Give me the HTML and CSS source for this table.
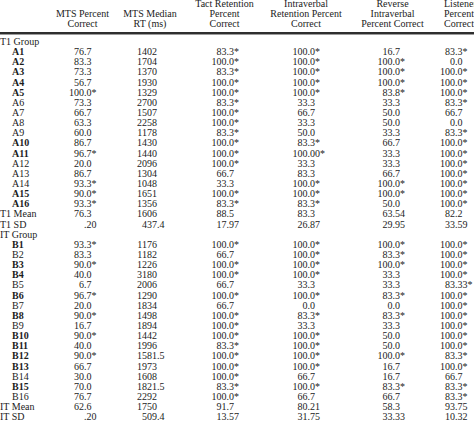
FILE: index.html
```html
<!DOCTYPE html>
<html>
<head>
<meta charset="utf-8">
<link rel="stylesheet" href="styles.css">
</head>
<body>
<table class="tbl">
<colgroup><col class="c0"><col class="c1"><col class="c2"><col class="c3"><col class="c4"><col class="c5"><col class="c6"></colgroup>
<thead>
<tr>
<th></th>
<th>MTS Percent<br>Correct</th>
<th>MTS Median<br>RT (ms)</th>
<th>Tact Retention<br>Percent<br>Correct</th>
<th>Intraverbal<br>Retention Percent<br>Correct</th>
<th>Reverse<br>Intraverbal<br>Percent Correct</th>
<th>Listener<br>Percent<br>Correct</th>
</tr>
<tr class="rule"><td colspan="7"></td></tr>
</thead>
<tbody>
<tr class="first"><td class="lab">T1 Group</td><td></td><td></td><td></td><td></td><td></td><td></td></tr>
<tr><td class="sub b">A1</td><td><span class="i">76</span>.7</td><td><span class="i">1402</span></td><td><span class="i">83</span>.3*</td><td><span class="i">100</span>.0*</td><td><span class="i">16</span>.7</td><td><span class="i">83</span>.3*</td></tr>
<tr><td class="sub b">A2</td><td><span class="i">83</span>.3</td><td><span class="i">1704</span></td><td><span class="i">100</span>.0*</td><td><span class="i">100</span>.0*</td><td><span class="i">100</span>.0*</td><td><span class="i">0</span>.0</td></tr>
<tr><td class="sub b">A3</td><td><span class="i">73</span>.3</td><td><span class="i">1370</span></td><td><span class="i">83</span>.3*</td><td><span class="i">100</span>.0*</td><td><span class="i">100</span>.0*</td><td><span class="i">100</span>.0*</td></tr>
<tr><td class="sub b">A4</td><td><span class="i">56</span>.7</td><td><span class="i">1930</span></td><td><span class="i">100</span>.0*</td><td><span class="i">100</span>.0*</td><td><span class="i">100</span>.0*</td><td><span class="i">100</span>.0*</td></tr>
<tr><td class="sub b">A5</td><td><span class="i">100</span>.0*</td><td><span class="i">1329</span></td><td><span class="i">100</span>.0*</td><td><span class="i">100</span>.0*</td><td><span class="i">83</span>.8*</td><td><span class="i">100</span>.0*</td></tr>
<tr><td class="sub">A6</td><td><span class="i">73</span>.3</td><td><span class="i">2700</span></td><td><span class="i">83</span>.3*</td><td><span class="i">33</span>.3</td><td><span class="i">33</span>.3</td><td><span class="i">83</span>.3*</td></tr>
<tr><td class="sub">A7</td><td><span class="i">66</span>.7</td><td><span class="i">1507</span></td><td><span class="i">100</span>.0*</td><td><span class="i">66</span>.7</td><td><span class="i">50</span>.0</td><td><span class="i">66</span>.7</td></tr>
<tr><td class="sub">A8</td><td><span class="i">63</span>.3</td><td><span class="i">2258</span></td><td><span class="i">100</span>.0*</td><td><span class="i">33</span>.3</td><td><span class="i">50</span>.0</td><td><span class="i">0</span>.0</td></tr>
<tr><td class="sub">A9</td><td><span class="i">60</span>.0</td><td><span class="i">1178</span></td><td><span class="i">83</span>.3*</td><td><span class="i">50</span>.0</td><td><span class="i">33</span>.3</td><td><span class="i">83</span>.3*</td></tr>
<tr><td class="sub b">A10</td><td><span class="i">86</span>.7</td><td><span class="i">1430</span></td><td><span class="i">100</span>.0*</td><td><span class="i">83</span>.3*</td><td><span class="i">66</span>.7</td><td><span class="i">100</span>.0*</td></tr>
<tr><td class="sub b">A11</td><td><span class="i">96</span>.7*</td><td><span class="i">1440</span></td><td><span class="i">100</span>.0*</td><td><span class="i">100</span>.00*</td><td><span class="i">33</span>.3</td><td><span class="i">100</span>.0*</td></tr>
<tr><td class="sub">A12</td><td><span class="i">20</span>.0</td><td><span class="i">2096</span></td><td><span class="i">100</span>.0*</td><td><span class="i">33</span>.3</td><td><span class="i">33</span>.3</td><td><span class="i">100</span>.0*</td></tr>
<tr><td class="sub">A13</td><td><span class="i">86</span>.7</td><td><span class="i">1304</span></td><td><span class="i">66</span>.7</td><td><span class="i">83</span>.3</td><td><span class="i">66</span>.7</td><td><span class="i">100</span>.0*</td></tr>
<tr><td class="sub">A14</td><td><span class="i">93</span>.3*</td><td><span class="i">1048</span></td><td><span class="i">33</span>.3</td><td><span class="i">100</span>.0*</td><td><span class="i">100</span>.0*</td><td><span class="i">100</span>.0*</td></tr>
<tr><td class="sub b">A15</td><td><span class="i">90</span>.0*</td><td><span class="i">1651</span></td><td><span class="i">100</span>.0*</td><td><span class="i">100</span>.0*</td><td><span class="i">100</span>.0*</td><td><span class="i">100</span>.0*</td></tr>
<tr><td class="sub b">A16</td><td><span class="i">93</span>.3*</td><td><span class="i">1356</span></td><td><span class="i">83</span>.3*</td><td><span class="i">83</span>.3*</td><td><span class="i">50</span>.0</td><td><span class="i">100</span>.0*</td></tr>
<tr><td class="lab">T1 Mean</td><td><span class="i">76</span>.3</td><td><span class="i">1606</span></td><td><span class="i">88</span>.5</td><td><span class="i">83</span>.3</td><td><span class="i">63</span>.54</td><td><span class="i">82</span>.2</td></tr>
<tr><td class="lab">T1 SD</td><td><span class="i"></span>.20</td><td><span class="i">437</span>.4</td><td><span class="i">17</span>.97</td><td><span class="i">26</span>.87</td><td><span class="i">29</span>.95</td><td><span class="i">33</span>.59</td></tr>
<tr><td class="lab it">IT Group</td><td></td><td></td><td></td><td></td><td></td><td></td></tr>
<tr><td class="sub b">B1</td><td><span class="i">93</span>.3*</td><td><span class="i">1176</span></td><td><span class="i">100</span>.0*</td><td><span class="i">100</span>.0*</td><td><span class="i">100</span>.0*</td><td><span class="i">100</span>.0*</td></tr>
<tr><td class="sub">B2</td><td><span class="i">83</span>.3</td><td><span class="i">1182</span></td><td><span class="i">66</span>.7</td><td><span class="i">100</span>.0*</td><td><span class="i">83</span>.3*</td><td><span class="i">100</span>.0*</td></tr>
<tr><td class="sub b">B3</td><td><span class="i">90</span>.0*</td><td><span class="i">1226</span></td><td><span class="i">100</span>.0*</td><td><span class="i">100</span>.0*</td><td><span class="i">100</span>.0*</td><td><span class="i">100</span>.0*</td></tr>
<tr><td class="sub b">B4</td><td><span class="i">40</span>.0</td><td><span class="i">3180</span></td><td><span class="i">100</span>.0*</td><td><span class="i">100</span>.0*</td><td><span class="i">33</span>.3</td><td><span class="i">100</span>.0*</td></tr>
<tr><td class="sub">B5</td><td><span class="i">6</span>.7</td><td><span class="i">2006</span></td><td><span class="i">66</span>.7</td><td><span class="i">33</span>.3</td><td><span class="i">33</span>.3</td><td><span class="i">83</span>.33*</td></tr>
<tr><td class="sub b">B6</td><td><span class="i">96</span>.7*</td><td><span class="i">1290</span></td><td><span class="i">100</span>.0*</td><td><span class="i">100</span>.0*</td><td><span class="i">83</span>.3*</td><td><span class="i">100</span>.0*</td></tr>
<tr><td class="sub">B7</td><td><span class="i">20</span>.0</td><td><span class="i">1834</span></td><td><span class="i">66</span>.7</td><td><span class="i">0</span>.0</td><td><span class="i">0</span>.0</td><td><span class="i">100</span>.0*</td></tr>
<tr><td class="sub b">B8</td><td><span class="i">90</span>.0*</td><td><span class="i">1498</span></td><td><span class="i">100</span>.0*</td><td><span class="i">83</span>.3*</td><td><span class="i">83</span>.3*</td><td><span class="i">100</span>.0*</td></tr>
<tr><td class="sub">B9</td><td><span class="i">16</span>.7</td><td><span class="i">1894</span></td><td><span class="i">100</span>.0*</td><td><span class="i">33</span>.3</td><td><span class="i">33</span>.3</td><td><span class="i">100</span>.0*</td></tr>
<tr><td class="sub b">B10</td><td><span class="i">90</span>.0*</td><td><span class="i">1442</span></td><td><span class="i">100</span>.0*</td><td><span class="i">100</span>.0*</td><td><span class="i">50</span>.0</td><td><span class="i">100</span>.0*</td></tr>
<tr><td class="sub b">B11</td><td><span class="i">40</span>.0</td><td><span class="i">1996</span></td><td><span class="i">83</span>.3*</td><td><span class="i">100</span>.0*</td><td><span class="i">50</span>.0</td><td><span class="i">100</span>.0*</td></tr>
<tr><td class="sub b">B12</td><td><span class="i">90</span>.0*</td><td><span class="i">1581</span>.5</td><td><span class="i">100</span>.0*</td><td><span class="i">100</span>.0*</td><td><span class="i">100</span>.0*</td><td><span class="i">83</span>.3*</td></tr>
<tr><td class="sub b">B13</td><td><span class="i">66</span>.7</td><td><span class="i">1973</span></td><td><span class="i">100</span>.0*</td><td><span class="i">100</span>.0*</td><td><span class="i">16</span>.7</td><td><span class="i">100</span>.0*</td></tr>
<tr><td class="sub">B14</td><td><span class="i">30</span>.0</td><td><span class="i">1608</span></td><td><span class="i">100</span>.0*</td><td><span class="i">66</span>.7</td><td><span class="i">16</span>.7</td><td><span class="i">66</span>.7</td></tr>
<tr><td class="sub b">B15</td><td><span class="i">70</span>.0</td><td><span class="i">1821</span>.5</td><td><span class="i">83</span>.3*</td><td><span class="i">100</span>.0*</td><td><span class="i">83</span>.3*</td><td><span class="i">83</span>.3*</td></tr>
<tr><td class="sub">B16</td><td><span class="i">76</span>.7</td><td><span class="i">2292</span></td><td><span class="i">100</span>.0*</td><td><span class="i">66</span>.7</td><td><span class="i">66</span>.7</td><td><span class="i">83</span>.3*</td></tr>
<tr><td class="lab it">IT Mean</td><td><span class="i">62</span>.6</td><td><span class="i">1750</span></td><td><span class="i">91</span>.7</td><td><span class="i">80</span>.21</td><td><span class="i">58</span>.3</td><td><span class="i">93</span>.75</td></tr>
<tr><td class="lab it">IT SD</td><td><span class="i"></span>.20</td><td><span class="i">509</span>.4</td><td><span class="i">13</span>.57</td><td><span class="i">31</span>.75</td><td><span class="i">33</span>.33</td><td><span class="i">10</span>.32</td></tr>
</tbody>
</table>
</body>
</html>
```

FILE: styles.css
```css
html, body {
  margin: 0;
  padding: 0;
  background: #ffffff;
  overflow: hidden;
}

body {
  font-family: "Liberation Serif", "Times New Roman", serif;
  font-size: 10px;
  color: #1c1c1c;
}

.tbl {
  border-collapse: separate;
  border-spacing: 0;
  table-layout: fixed;
  width: 490px;
  margin-top: -1.4px;
}

.c0 { width: 50px; }
.c1 { width: 65px; }
.c2 { width: 70px; }
.c3 { width: 77px; }
.c4 { width: 88px; }
.c5 { width: 84px; }
.c6 { width: 56px; }

.tbl th {
  font-weight: normal;
  line-height: 10px;
  vertical-align: bottom;
  text-align: center;
  white-space: nowrap;
  padding: 0 0 3px 0;
}

.tbl th:nth-child(4) { padding-left: 2px; }
.tbl th:nth-child(6) { padding-left: 1px; }
.tbl th:nth-child(7) { text-align: left; padding-left: 10px; }

.rule td {
  padding: 0;
  height: 0;
  font-size: 0;
  line-height: 0;
  border-top: 2px solid #2e2e2e;
  border-bottom: 1px solid #9c9c9c;
}

.tbl tbody td {
  padding: 0;
  line-height: 10.14px;
  height: 10.14px;
  white-space: nowrap;
  text-align: left;
}

.tbl tbody tr.first td {
  padding-top: 2.4px;
}

.lab { padding-left: 0; }
.it { margin-left: -1px; }
.tbl tbody td.sub { padding-left: 12px; }
.b { font-weight: bold; }

.i {
  display: inline-block;
  width: 20px;
  text-align: right;
}

.tbl tbody td:nth-child(2) { padding-left: 14px; }
.tbl tbody td:nth-child(3) { padding-left: 12px; }
.tbl tbody td:nth-child(3) .i { width: 30px; }
.tbl tbody td:nth-child(4) { padding-left: 21.5px; }
.tbl tbody td:nth-child(5) { padding-left: 25.5px; }
.tbl tbody td:nth-child(6) { padding-left: 22.5px; }
.tbl tbody td:nth-child(7) { padding-left: 1px; }
```
